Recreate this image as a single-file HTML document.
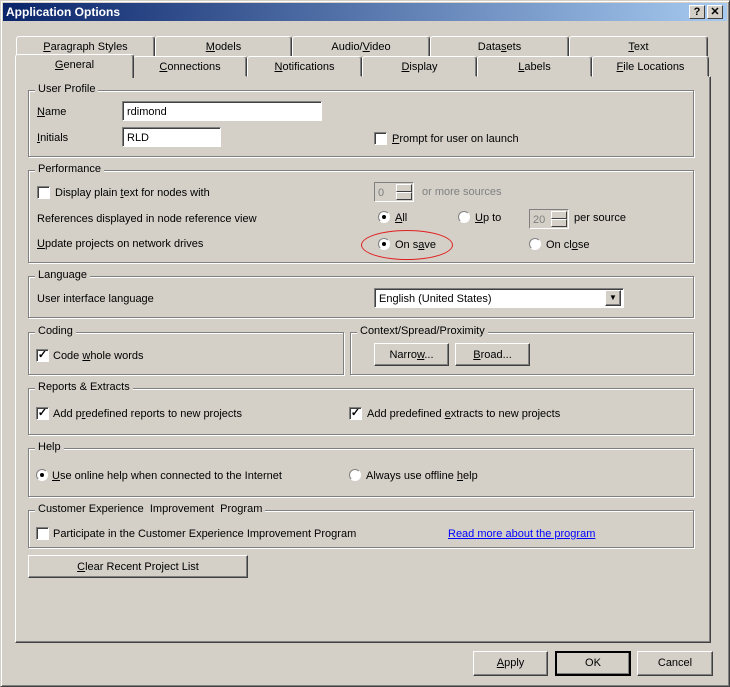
<!DOCTYPE html>
<html><head><style>
*{box-sizing:border-box;margin:0;padding:0}
body{width:730px;height:687px;background:#d4d0c8;font-family:"Liberation Sans",sans-serif;font-size:11px;color:#000;position:relative;overflow:hidden}
.a{position:absolute;white-space:nowrap;margin-top:1px}
.win{position:absolute;left:0;top:0;width:730px;height:687px;border:1px solid;border-color:#d4d0c8 #404040 #404040 #d4d0c8;box-shadow:inset 1px 1px #fff,inset -1px -1px #808080}
.title{position:absolute;left:3px;top:3px;width:724px;height:18px;background:linear-gradient(90deg,#0a246a,#a6caf0)}
.title span{position:absolute;left:3px;top:2px;color:#fff;font-weight:bold;font-size:12px}
.tb{position:absolute;top:2px;width:16px;height:14px;background:#d4d0c8;border:1px solid;border-color:#fff #404040 #404040 #fff;font-weight:bold;font-size:11px;text-align:center;line-height:12px}
.tab{position:absolute;height:21px;border:1px solid;border-color:#fff #404040 transparent #fff;border-radius:3px 3px 0 0;text-align:center;line-height:21px;background:#d4d0c8;box-shadow:inset -1px 0 #808080}
.panel{position:absolute;left:15px;top:76px;width:696px;height:567px;border:1px solid;border-color:#fff #404040 #404040 #fff;box-shadow:inset -1px -1px #808080}
.grp{position:absolute;border:1px solid #808080;box-shadow:inset 1px 1px #fff,1px 1px #fff}
.grp>b{position:absolute;top:-8px;left:6px;background:#d4d0c8;font-weight:normal;padding:0 3px 0 3px}
.inp{position:absolute;height:20px;background:#fff;border:1px solid;border-color:#808080 #fff #fff #808080;box-shadow:inset 1px 1px #404040;padding:4px 0 0 4px}
.cb{position:absolute;width:13px;height:13px;background:#fff;border:1px solid;border-color:#808080 #fff #fff #808080;box-shadow:inset 1px 1px #404040;font-size:11px;line-height:10px;text-align:center;font-weight:bold}
.rb{position:absolute;width:12px;height:12px;border-radius:50%;background:#fff;border:1px solid;border-color:#808080 #fff #fff #808080}
.rb.on::after{content:"";position:absolute;left:3px;top:3px;width:4px;height:4px;border-radius:50%;background:#000}
.btn{position:absolute;height:23px;background:#d4d0c8;border:1px solid;border-color:#fff #404040 #404040 #fff;box-shadow:inset -1px -1px #808080;text-align:center;line-height:22px}
u{text-decoration:underline}
.dis{color:#808080}
.spin{position:absolute;width:40px;height:20px;background:#d4d0c8;border:1px solid;border-color:#808080 #fff #fff #808080;color:#808080;padding:4px 0 0 3px}
.spin i{position:absolute;right:1px;width:16px;height:8px;border:1px solid;border-color:#fff #404040 #404040 #fff}
</style></head><body>
<div class="win"></div>
<div class="title"><span>Application Options</span>
<div class="tb" style="left:686px">?</div><div class="tb" style="left:704px">✕</div></div>

<div class="tab" style="left:16px;top:36px;width:139px"><u>P</u>aragraph Styles</div>
<div class="tab" style="left:155px;top:36px;width:137px"><u>M</u>odels</div>
<div class="tab" style="left:292px;top:36px;width:138px">Audio/<u>V</u>ideo</div>
<div class="tab" style="left:430px;top:36px;width:139px">Data<u>s</u>ets</div>
<div class="tab" style="left:569px;top:36px;width:139px"><u>T</u>ext</div>

<div class="panel"></div>
<div class="tab" style="left:133px;top:56px;width:114px"><u>C</u>onnections</div>
<div class="tab" style="left:247px;top:56px;width:115px"><u>N</u>otifications</div>
<div class="tab" style="left:362px;top:56px;width:115px"><u>D</u>isplay</div>
<div class="tab" style="left:477px;top:56px;width:115px"><u>L</u>abels</div>
<div class="tab" style="left:592px;top:56px;width:117px"><u>F</u>ile Locations</div>
<div class="tab" style="left:15px;top:54px;width:119px;height:24px;border-bottom:none;line-height:20px"><u>G</u>eneral</div>

<div class="grp" style="left:28px;top:90px;width:666px;height:67px"><b>User Profile</b></div>
<div class="a" style="left:37px;top:105px"><u>N</u>ame</div>
<div class="inp" style="left:122px;top:101px;width:200px">rdimond</div>
<div class="a" style="left:37px;top:131px"><u>I</u>nitials</div>
<div class="inp" style="left:122px;top:127px;width:99px">RLD</div>
<div class="cb" style="left:374px;top:132px"></div>
<div class="a" style="left:392px;top:132px"><u>P</u>rompt for user on launch</div>

<div class="grp" style="left:28px;top:170px;width:666px;height:93px"><b>Performance</b></div>
<div class="cb" style="left:37px;top:186px"></div>
<div class="a" style="left:55px;top:186px">Display plain <u>t</u>ext for nodes with</div>
<div class="spin" style="left:374px;top:182px">0<i style="top:1px"></i><i style="top:9px"></i></div>
<div class="a dis" style="left:422px;top:185px">or more sources</div>
<div class="a" style="left:37px;top:212px">References displayed in node reference view</div>
<div class="rb on" style="left:378px;top:211px"></div><div class="a" style="left:395px;top:211px"><u>A</u>ll</div>
<div class="rb" style="left:458px;top:211px"></div><div class="a" style="left:475px;top:211px"><u>U</u>p to</div>
<div class="spin" style="left:529px;top:209px">20<i style="top:1px"></i><i style="top:9px"></i></div>
<div class="a" style="left:574px;top:211px">per source</div>
<div class="a" style="left:37px;top:237px"><u>U</u>pdate projects on network drives</div>
<div class="rb on" style="left:378px;top:238px"></div><div class="a" style="left:395px;top:238px">On s<u>a</u>ve</div>
<div class="a" style="left:361px;top:230px;width:92px;height:30px;border:1px solid #e02020;border-radius:50%;margin-top:0"></div>
<div class="rb" style="left:529px;top:238px"></div><div class="a" style="left:546px;top:238px">On cl<u>o</u>se</div>

<div class="grp" style="left:28px;top:276px;width:666px;height:42px"><b>Language</b></div>
<div class="a" style="left:37px;top:292px">User interface language</div>
<div class="inp" style="left:374px;top:288px;width:250px">English (United States)
<div class="btn" style="left:230px;top:1px;width:16px;height:16px;line-height:14px;font-size:8px">▼</div></div>

<div class="grp" style="left:28px;top:332px;width:316px;height:43px"><b>Coding</b></div>
<div class="cb" style="left:36px;top:349px">✓</div>
<div class="a" style="left:53px;top:349px">Code <u>w</u>hole words</div>
<div class="grp" style="left:350px;top:332px;width:344px;height:43px"><b>Context/Spread/Proximity</b></div>
<div class="btn" style="left:374px;top:343px;width:75px">Narro<u>w</u>...</div>
<div class="btn" style="left:455px;top:343px;width:75px"><u>B</u>road...</div>

<div class="grp" style="left:28px;top:388px;width:666px;height:47px"><b>Reports &amp; Extracts</b></div>
<div class="cb" style="left:36px;top:407px">✓</div>
<div class="a" style="left:53px;top:407px">Add p<u>r</u>edefined reports to new projects</div>
<div class="cb" style="left:349px;top:407px">✓</div>
<div class="a" style="left:367px;top:407px">Add predefined <u>e</u>xtracts to new projects</div>

<div class="grp" style="left:28px;top:448px;width:666px;height:49px"><b>Help</b></div>
<div class="rb on" style="left:36px;top:469px"></div><div class="a" style="left:52px;top:469px"><u>U</u>se online help when connected to the Internet</div>
<div class="rb" style="left:349px;top:469px"></div><div class="a" style="left:366px;top:469px">Always use offline <u>h</u>elp</div>

<div class="grp" style="left:28px;top:510px;width:666px;height:38px"><b>Customer Experience &nbsp;Improvement &nbsp;Program</b></div>
<div class="cb" style="left:36px;top:527px"></div>
<div class="a" style="left:53px;top:527px">Participate in the Customer Experience Improvement Program</div>
<div class="a" style="left:448px;top:527px;color:#0000ff;text-decoration:underline">Read more about the program</div>

<div class="btn" style="left:28px;top:555px;width:220px"><u>C</u>lear Recent Project List</div>

<div class="btn" style="left:473px;top:651px;width:75px;height:25px;line-height:23px"><u>A</u>pply</div>
<div class="btn" style="left:555px;top:651px;width:76px;height:25px;line-height:21px;border:2px solid #000">OK</div>
<div class="btn" style="left:637px;top:651px;width:76px;height:25px;line-height:23px">Cancel</div>
</body></html>
